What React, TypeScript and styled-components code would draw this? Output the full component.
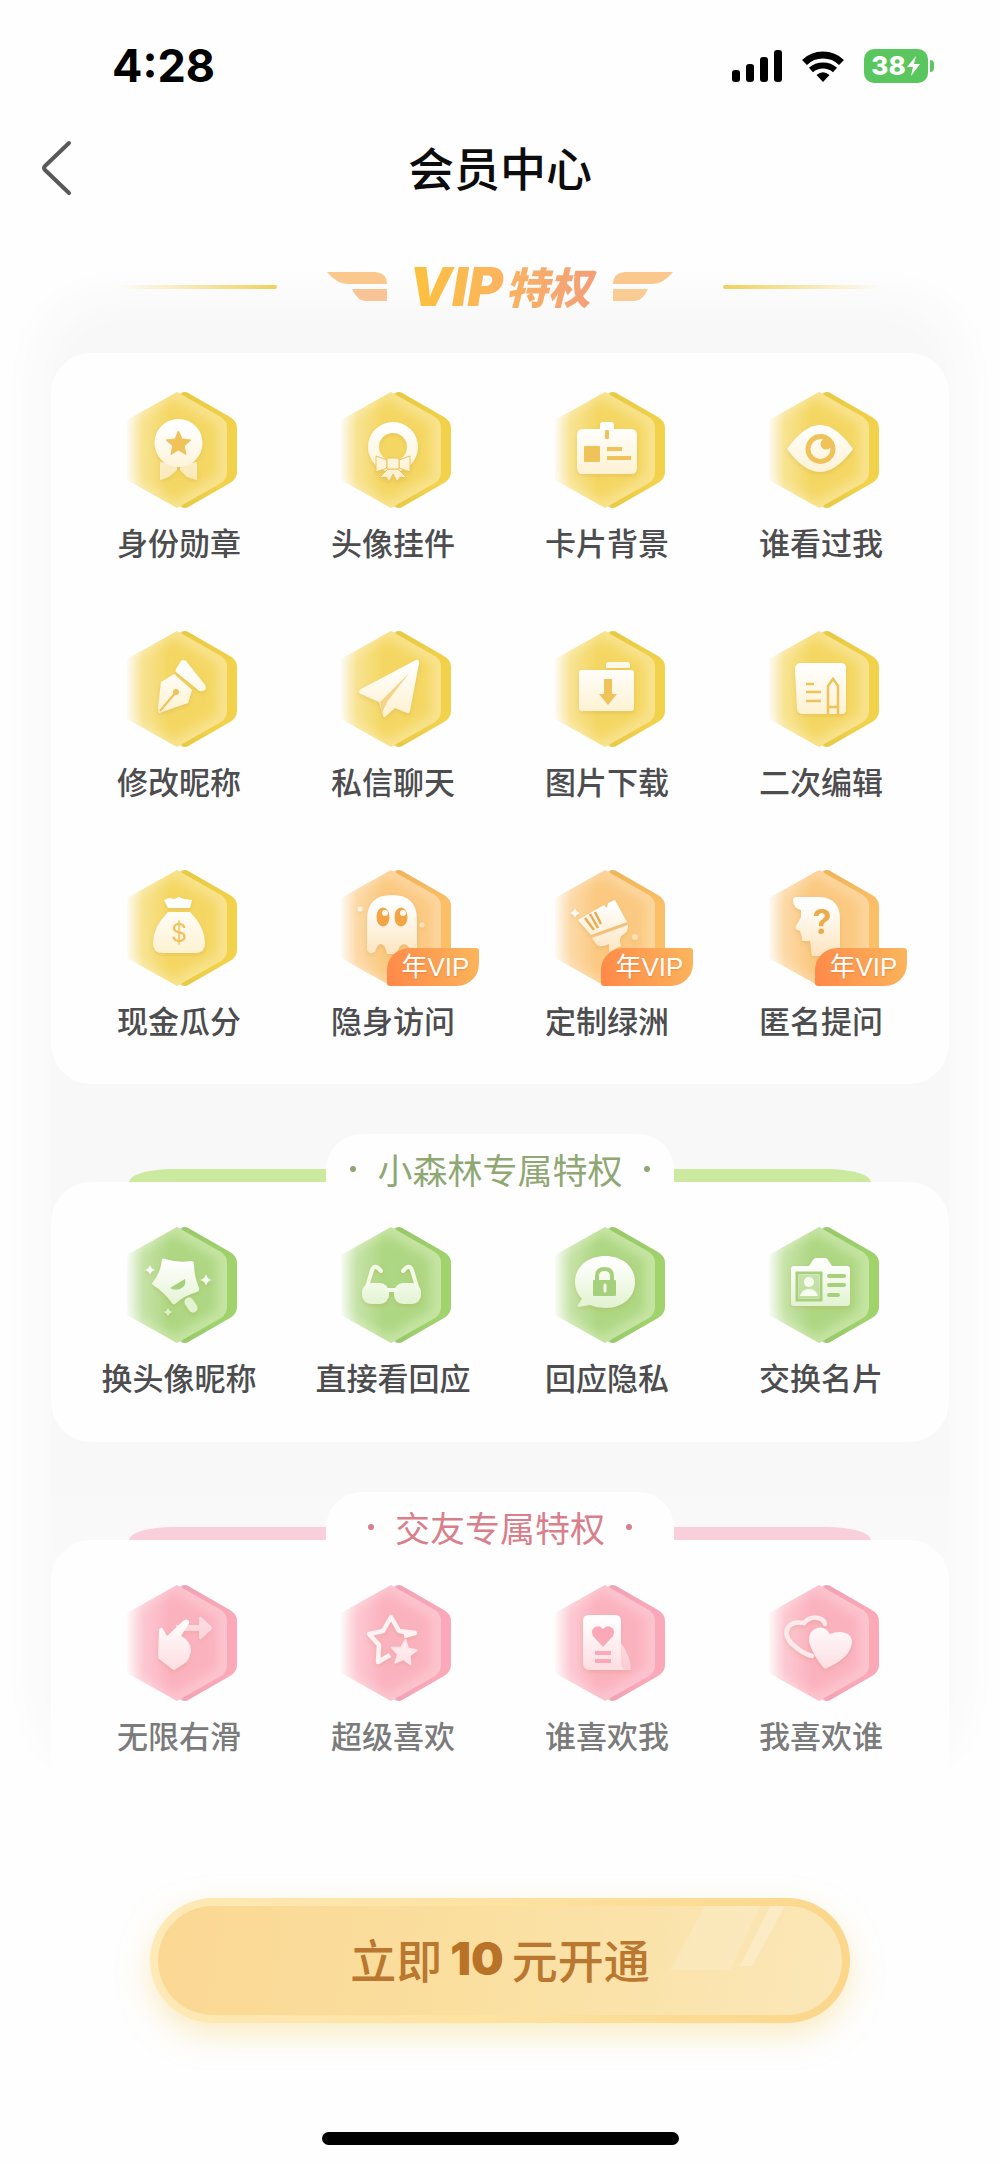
import React from "react";
import styled, { createGlobalStyle } from "styled-components";

const cjk = `"Noto Sans CJK SC", sans-serif`;
const latin = `Inter, "Noto Sans CJK SC", sans-serif`;

const GlobalStyle = createGlobalStyle`
  *, *::before, *::after { box-sizing: border-box; }
  body { margin: 0; background: #fefefe; font-family: ${cjk}; color: #4b4b4d; }
  button { font: inherit; color: inherit; border: 0; padding: 0; background: none; cursor: pointer; }
  ul { list-style: none; margin: 0; padding: 0; }
  h1, h2 { margin: 0; }
`;

const Page = styled.div`
  display: flex;
  flex-direction: column;
  min-height: 100vh;
  overflow: hidden;
`;

/* ---------- status bar ---------- */

const StatusBar = styled.div`
  display: flex;
  align-items: center;
  justify-content: space-between;
  padding: 44px 66px 38px 112px;
`;

const Clock = styled.time`
  font: 700 45px/44px ${latin};
  color: #000;
`;

const StatusIcons = styled.div`
  display: flex;
  align-items: center;
  gap: 20px;
`;

const Battery = styled.div`
  display: flex;
  align-items: center;
  gap: 2px;
`;

const BatteryBody = styled.span`
  display: flex;
  align-items: center;
  justify-content: center;
  width: 64px;
  height: 34px;
  border-radius: 10px;
  background: #5ac75e;
  color: #fff;
  font: 800 26px/34px ${latin};
`;

const BatteryNub = styled.span`
  width: 4px;
  height: 12px;
  border-radius: 0 6px 6px 0;
  background: #5ac75e;
`;

/* ---------- navigation ---------- */

const NavBar = styled.header`
  display: grid;
  grid-template-columns: 72px 1fr 72px;
  align-items: center;
  height: 88px;
  padding: 0 20px 4px;
`;

const BackButton = styled.button`
  display: flex;
  justify-content: center;
  svg { display: block; }
`;

const PageTitle = styled.h1`
  padding-bottom: 4px;
  font-size: 46px;
  line-height: 56px;
  font-weight: 500;
  text-align: center;
  color: #0c0c0c;
`;

/* ---------- VIP heading ---------- */

const VipHeading = styled.div`
  position: relative;
  z-index: 1;
  display: flex;
  align-items: center;
  justify-content: center;
  padding: 43px 118px 36px;
`;

const HeadingLine = styled.span<{ $side: "left" | "right" }>`
  flex: 1;
  height: 4px;
  border-radius: 2px;
  background: linear-gradient(to ${(p) => p.$side}, #efd15c, rgba(251, 236, 180, 0));
`;

const Wing = styled.svg`
  width: 60px;
  height: 30px;
  margin-left: 50px;
`;

const WingRight = styled(Wing)`
  margin: 0 50px 0 0;
`;

const VipTitle = styled.h2`
  display: flex;
  align-items: center;
  justify-content: center;
  gap: 2px;
  width: 226px;
  line-height: 60px;
  font-style: italic;
  font-weight: 900;
  color: transparent;
  background: linear-gradient(90deg, #fbc23c 10%, #fbb45e 50%, #f3a078 90%);
  -webkit-background-clip: text;
  background-clip: text;
`;

const VipLatin = styled.span`
  font: italic 900 54px/60px ${latin};
`;

const VipHan = styled.span`
  padding-bottom: 4px;
  font-size: 43px;
  line-height: 56px;
`;

/* ---------- cards ---------- */

const Main = styled.main`
  display: flex;
  flex-direction: column;
  margin: 0 51px;
  border-radius: 60px;
  background: linear-gradient(#f8f8f8 78%, #fefefe 97%);
  box-shadow: 0 -44px 44px 14px #f8f8f8;
`;

const Card = styled.div<{ $roomy?: boolean }>`
  padding: ${(p) => (p.$roomy ? "43px 21px" : "37px 21px 42px")};
  border-radius: 40px;
  background: #fefefe;
`;

const Grid = styled.ul`
  display: grid;
  grid-template-columns: repeat(4, 1fr);
  row-gap: 65px;
`;

const Cell = styled.li`
  display: flex;
  justify-content: center;
`;

const Perk = styled.button`
  display: flex;
  flex-direction: column;
  align-items: center;
  gap: 12px;
  padding-bottom: 2px;
`;

const IconBox = styled.span`
  position: relative;
  display: block;
  width: 120px;
  height: 120px;
  svg { display: block; overflow: visible; }
`;

const YearBadge = styled.span`
  position: absolute;
  left: 54px;
  bottom: 2px;
  width: 92px;
  height: 38px;
  padding-left: 5px;
  border-radius: 22px 3px 22px 3px;
  background: linear-gradient(75deg, #ff8848, #fab65c);
  color: #fff;
  font: 400 26px/38px "Liberation Sans", ${cjk};
  text-align: center;
  text-shadow: 0 1px 2px rgba(214, 100, 20, 0.4);
  white-space: nowrap;
`;

const Label = styled.span<{ $faded?: boolean }>`
  font-size: 31px;
  line-height: 40px;
  font-weight: 500;
  white-space: nowrap;
  color: ${(p) => (p.$faded ? "#7b7b7b" : "#4d4d4f")};
`;

const Section = styled.section`
  display: flex;
  flex-direction: column;
  margin-top: 50px;
`;

const TabRow = styled.div`
  position: relative;
  z-index: 1;
  display: flex;
  align-items: flex-start;
  justify-content: center;
  margin-bottom: -12px;
  padding: 0 78px;
`;

const Strip = styled.span<{ $color: string; $side: "left" | "right" }>`
  flex: 1;
  height: 13px;
  margin-top: 35px;
  background: ${(p) => p.$color};
  border-radius: ${(p) => (p.$side === "left" ? "44px 0 0 0 / 13px 0 0 0" : "0 44px 0 0 / 0 13px 0 0")};
`;

const Tab = styled.h2<{ $color: string }>`
  display: flex;
  align-items: center;
  justify-content: center;
  gap: 21px;
  width: 348px;
  height: 60px;
  padding-top: 10px;
  border-radius: 36px 36px 0 0;
  background: #fefefe;
  color: ${(p) => p.$color};
  font-size: 35px;
  line-height: 50px;
  font-weight: 400;
  &::before,
  &::after {
    content: "";
    width: 6px;
    height: 6px;
    border-radius: 50%;
    background: currentColor;
  }
`;

/* ---------- footer ---------- */

const Footer = styled.footer`
  display: flex;
  flex-direction: column;
  align-items: center;
  padding: 98px 150px 21px;
`;

const BuyButton = styled.button`
  position: relative;
  display: flex;
  align-items: center;
  justify-content: center;
  gap: 8px;
  align-self: stretch;
  height: 125px;
  padding-bottom: 6px;
  border: 8px solid transparent;
  border-radius: 63px;
  background:
    linear-gradient(100deg, #fbd793, #fadf9f 45%, #fbe7b8) padding-box,
    linear-gradient(100deg, #feeab8, #fde2a0 50%, #fbd68a) border-box;
  box-shadow: 0 12px 30px rgba(247, 220, 140, 0.5);
  color: #b97730;
  font-size: 46px;
  line-height: 60px;
  font-weight: 500;
`;

const Price = styled.strong`
  font: 900 46px/60px ${latin};
  color: #b97328;
`;

const Shine = styled.svg`
  position: absolute;
  top: 0;
  right: 42px;
  width: 130px;
  height: 64px;
`;

const HomeIndicator = styled.div`
  width: 51%;
  height: 13px;
  margin-top: 109px;
  border-radius: 7px;
  background: #000;
`;

/* ---------- hexagon icons ---------- */

type Tone = "gold" | "amber" | "green" | "pink";

const tones: Record<Tone, { side: string; edge: string; rim: string; core: string; ink: string; tint: string }> = {
  gold: { side: "#f3d24b", edge: "#e6ca42", rim: "#f8e28c", core: "#f4d764", ink: "#efc25a", tint: "#fdf0cc" },
  amber: { side: "#fbbf68", edge: "#efb455", rim: "#fcd59d", core: "#fbc981", ink: "#ecab4e", tint: "#fde3ba" },
  green: { side: "#a0d36c", edge: "#98c86a", rim: "#c5e4a2", core: "#aed783", ink: "#a7d07c", tint: "#dcf1c8" },
  pink: { side: "#fba9b9", edge: "#f0a3b5", rim: "#fcc4cd", core: "#fbb2bf", ink: "#fba9b8", tint: "#fddbe0" },
};

const SharedDefs = () => (
  <svg width="0" height="0" aria-hidden="true" style={{ position: "absolute" }}>
    <defs>
      <linearGradient id="fade-left" gradientUnits="userSpaceOnUse" x1="6" y1="0" x2="50" y2="0">
        <stop offset="0" stopColor="#fff" stopOpacity="0" />
        <stop offset="0.4" stopColor="#fff" stopOpacity="0.7" />
        <stop offset="1" stopColor="#fff" />
      </linearGradient>
      <mask id="hex-mask" maskUnits="userSpaceOnUse" x="0" y="0" width="120" height="120">
        <rect width="120" height="120" fill="url(#fade-left)" />
      </mask>
      <linearGradient id="side-fade" gradientUnits="userSpaceOnUse" x1="58" y1="0" x2="64" y2="0">
        <stop offset="0" stopColor="#fff" stopOpacity="0" />
        <stop offset="1" stopColor="#fff" />
      </linearGradient>
      <mask id="side-mask" maskUnits="userSpaceOnUse" x="0" y="0" width="120" height="120">
        <rect width="120" height="120" fill="url(#side-fade)" />
      </mask>
      <clipPath id="hex-clip">
        <path d="M58 2L102 27Q108 31 108 38V82Q108 89 102 93L58 118L8 90V30Z" />
      </clipPath>
      <filter id="soft" x="-30%" y="-30%" width="160%" height="160%">
        <feGaussianBlur stdDeviation="5" />
      </filter>
      <filter id="lift" x="-20%" y="-20%" width="140%" height="150%">
        <feDropShadow dx="0" dy="2" stdDeviation="2" floodColor="#b87a1c" floodOpacity="0.2" />
      </filter>
      {(Object.keys(tones) as Tone[]).map((t) => (
        <React.Fragment key={t}>
          <linearGradient id={`side-${t}`} x1="0" y1="0" x2="0" y2="1">
            <stop offset="0" stopColor={tones[t].edge} />
            <stop offset="0.3" stopColor={tones[t].side} />
            <stop offset="0.8" stopColor={tones[t].side} />
            <stop offset="1" stopColor={tones[t].edge} />
          </linearGradient>
          <linearGradient id={`glyph-${t}`} gradientUnits="userSpaceOnUse" x1="0" y1="30" x2="0" y2="90">
            <stop offset="0.1" stopColor="#fff" />
            <stop offset="1" stopColor={tones[t].tint} />
          </linearGradient>
        </React.Fragment>
      ))}
    </defs>
  </svg>
);

const star = (cx: number, cy: number, outer: number, inner: number, turn = 0) =>
  Array.from({ length: 10 }, (_, i) => {
    const r = i % 2 ? inner : outer;
    const a = ((i * 36 - 90 + turn) * Math.PI) / 180;
    return `${(cx + r * Math.cos(a)).toFixed(1)},${(cy + r * Math.sin(a)).toFixed(1)}`;
  }).join(" ");

const spark = (x: number, y: number, r: number) =>
  `M${x} ${y - r}Q${x + 1} ${y - 1} ${x + r} ${y}Q${x + 1} ${y + 1} ${x} ${y + r}Q${x - 1} ${y + 1} ${x - r} ${y}Q${x - 1} ${y - 1} ${x} ${y - r}Z`;

/* Each glyph draws with the light fill it inherits; `ink` is the colour of its cut-outs. */
const glyphs: Record<string, (ink: string) => React.ReactNode> = {
  medal: (ink) => (
    <>
      <path opacity="0.8" d="M41 72V90L50 87L58 80V74ZM61 74V80L68 87L78 90V72Z" />
      <circle cx="59.5" cy="53" r="24" />
      <polygon points={star(59.5, 54, 13, 6)} fill={ink} stroke={ink} strokeWidth="1" strokeLinejoin="round" />
    </>
  ),
  wreath: (ink) => (
    <>
      <path fillRule="evenodd" d="M60 32a25 25 0 1 1 0 50a25 25 0 1 1 0-50ZM60 43a14 14 0 1 0 0 28a14 14 0 1 0 0-28Z" />
      <g stroke={ink} strokeWidth="1">
        <path d="M43 66L54 70V78L43 82Z" />
        <path d="M77 66L66 70V78L77 82Z" />
        <path d="M55 79L46 88L53 87L56 92L60 84L64 92L67 87L74 88L65 79Z" />
        <rect x="54" y="68" width="12" height="11" rx="1" />
      </g>
    </>
  ),
  badge: (ink) => (
    <>
      <path d="M36 39H53V35Q53 32 56 32H64Q67 32 67 35V39H84Q90 39 90 45V78Q90 84 84 84H36Q30 84 30 78V45Q30 39 36 39Z" />
      <g fill={ink}>
        <rect x="58" y="40" width="4" height="9" rx="1" />
        <rect x="37" y="56" width="16" height="16" rx="1" />
        <rect x="60" y="57" width="15" height="4" />
        <rect x="60" y="66" width="24" height="4" />
      </g>
    </>
  ),
  eye: (ink) => (
    <>
      <path d="M26 59Q43 35 59 35Q75 35 92 59Q75 82 59 82Q43 82 26 59Z" strokeLinejoin="round" />
      <circle cx="59.5" cy="59" r="12.5" fill="none" stroke={ink} strokeWidth="5" />
      <circle cx="65" cy="54" r="5.5" fill={ink} />
    </>
  ),
  pen: (ink) => (
    <>
      <path d="M57 40L62 32Q64 30 67 32L86 56Q88 59 86 61L83 62Q80 63 78 60L57 43Q56 42 57 40Z" />
      <path d="M55 45L73 61L69 74L40 84L39 79L42 53Z" strokeLinejoin="round" />
      <path d="M41 82L57 63" stroke={ink} strokeWidth="2" />
      <circle cx="57" cy="63" r="3" fill={ink} />
    </>
  ),
  plane: (ink) => (
    <>
      <path d="M83 31Q86 30 86 34L77 82Q76 85 74 84L62 79L52 88Q50 89 50 86L46 73L28 65Q24 63 28 60Z" />
      <path d="M77 43L47 73L49 84L54 73Z" fill={ink} opacity="0.65" />
    </>
  ),
  folder: (ink) => (
    <>
      <path d="M62 33H80Q83 33 83 36V39H59V36Q59 33 62 33Z" opacity="0.85" />
      <rect x="32" y="41" width="55" height="41" rx="3" />
      <path d="M57 50H65V65H70L61 76L52 65H57Z" fill={ink} />
    </>
  ),
  note: (ink) => (
    <>
      <path d="M40 34H80Q86 34 85 41V79Q86 85 80 85H43Q36 85 36 79L34 41Q34 34 40 34Z" />
      <g fill="none" stroke={ink} strokeWidth="2.5">
        <path d="M45 55H53M45 63H60M45 72H60" />
        <path d="M67 85V57L72 50L77 57V85M67 78H77" />
      </g>
    </>
  ),
  money: (ink) => (
    <>
      <path d="M45 32L50 30L55 31L60 29L65 31L73 32L71 40H49Z" strokeLinejoin="round" />
      <path d="M49 44H71Q86 59 86 75Q86 85 76 85H44Q34 85 34 75Q34 59 49 44Z" />
      <text x="60" y="74" textAnchor="middle" fontFamily="Inter, sans-serif" fontSize="25" fill={ink} stroke="none">
        $
      </text>
    </>
  ),
  ghost: () => (
    <>
      <path d="M34 82V52Q34 27 59 27Q84 27 84 52V84L78 86Q76 76 71 76Q66 76 64 86H54Q52 76 48 76Q44 76 42 84Q36 87 34 82Z" />
      <g fill="#f3a544">
        <ellipse cx="50" cy="49" rx="6.5" ry="9.5" />
        <ellipse cx="68" cy="49" rx="6.5" ry="9.5" />
      </g>
      <circle cx="52" cy="45" r="3" />
      <circle cx="70" cy="45" r="3" />
      <circle cx="27" cy="41" r="2.5" opacity="0.8" />
      <circle cx="89" cy="57" r="2.5" opacity="0.6" />
    </>
  ),
  brush: (ink) => (
    <>
      <path d="M31 52L57 37L60 40L61 35L68 32L80 54L44 67Z" />
      <path d="M38 50L47 62M43 46L51 60M48 44L54 56" stroke={ink} strokeWidth="2.5" />
      <path d="M45 70L81 57Q82 64 74 68Q72 72 74 78L62 84L62 76Q54 80 50 77Z" />
      <path d={spark(28, 45, 5)} />
      <circle cx="88" cy="69" r="3" opacity="0.6" />
    </>
  ),
  head: (ink) => (
    <>
      <path d="M32 32Q32 29 36 29H60Q79 31 79 51V88H51L49 73H43Q40 73 41 69L39 63L35 61Q34 60 35 58L40 49V42Q32 40 32 32Z" />
      <text x="61" y="66" textAnchor="middle" fontFamily="Inter, sans-serif" fontWeight="700" fontSize="34" fill={ink} stroke="none">
        ?
      </text>
    </>
  ),
  wand: (ink) => (
    <>
      <path d="M70 77L74 83" stroke="#e2f3d2" strokeWidth="9" strokeLinecap="round" />
      <path d="M43 34Q44 33 46 34Q59 38 72 36Q75 36 75 39Q75 51 80 63Q81 66 78 67Q66 70 56 79Q54 80 53 78Q45 67 34 60Q32 59 34 57Q42 47 43 34Z" />
      <path d="M51 63L66 54Q68 61 61 64Q55 66 51 63Z" fill={ink} />
      <path d={`${spark(31, 45, 5)}${spark(87, 55, 6)}${spark(49, 87, 4)}`} />
    </>
  ),
  glasses: () => (
    <>
      <rect x="29" y="58" width="27" height="21" rx="9" />
      <rect x="61" y="58" width="27" height="21" rx="9" />
      <g fill="none" stroke="#f3fbe9" strokeWidth="4" strokeLinecap="round">
        <path d="M54 65H63" />
        <path d="M34 62L39 45Q42 38 48 46M84 62L79 45Q76 38 70 46" />
      </g>
    </>
  ),
  lock: (ink) => (
    <>
      <path d="M58 31C76 31 88 42 88 57S76 83 58 83Q50 83 43 80L31 82Q30 81 31 80L35 74Q28 67 28 57C28 42 41 31 58 31Z" />
      <rect x="46" y="55" width="23" height="16" rx="1" fill={ink} />
      <path d="M50 56V51Q50 44 57.500 44T65 51V56" fill="none" stroke={ink} strokeWidth="4" />
      <path d="M58 60V66" stroke="#f1fae8" strokeWidth="3" strokeLinecap="round" />
    </>
  ),
  idcard: (ink) => (
    <>
      <path d="M33 41H48L52 35Q53 33 55 33H64Q66 33 67 35L71 41H86Q89 41 89 44V78Q89 81 86 81H33Q30 81 30 78V44Q30 41 33 41Z" />
      <rect x="36" y="48" width="24" height="27" fill="none" stroke={ink} strokeWidth="3" />
      <rect x="38" y="50" width="20" height="23" fill={ink} opacity="0.6" />
      <circle cx="48" cy="57" r="5" fill="#f6fcef" />
      <path d="M39 71Q41 64 48 64T57 71Z" fill="#f6fcef" />
      <path d="M68 51H83M68 60H83M68 70H77" stroke={ink} strokeWidth="4" strokeLinecap="round" />
    </>
  ),
  swipe: () => (
    <>
      <path d="M57 42H80V35Q80 33 82 34L92 43Q94 45 92 47L82 56Q80 57 80 54V48H57Z" opacity="0.55" />
      <path d="M40 47Q41 43 44 46L48 53L64 38Q68 35 70 38Q71 40 69 42L62 53Q72 58 72 68Q70 78 66 80L57 86Q55 88 53 86L39 75Z" />
    </>
  ),
  stars: () => (
    <>
      <path d="M71 53L82 50L66 48L58 34L50 48L36 51L46 62L45 79L57 72" fill="none" stroke="#fff3f4" strokeWidth="4.500" strokeLinejoin="round" />
      <polygon points={star(71, 70, 13, 6, 6)} stroke="#fde6ea" strokeWidth="2" strokeLinejoin="round" />
    </>
  ),
  likecard: (ink) => (
    <>
      <path d="M74 60Q84 74 84 87H70Z" opacity="0.65" />
      <path d="M42 32H68Q74 32 74 38V80Q74 87 80 87H43Q36 87 36 80V38Q36 32 42 32Z" />
      <path d="M56 64L46 53Q43 47 48 44Q53 42 56 46Q59 42 64 44Q69 47 66 53Z" fill={ink} />
      <path d="M48 70H64M48 78H64" stroke={ink} strokeWidth="4" />
    </>
  ),
  hearts: () => (
    <>
      <path d="M51 73Q42 71 30 60Q22 50 28 43Q33 38 43 40Q49 33 57 35Q63 36 64 41" fill="none" stroke="#fdeaed" strokeWidth="4.500" strokeLinecap="round" />
      <path d="M62 84Q52 72 48 59Q47 48 56 45Q64 43 69 51Q79 47 87 51Q93 56 90 64Q86 76 66 85Q64 87 62 84Z" />
    </>
  ),
};

const HexIcon = ({ tone, glyph }: { tone: Tone; glyph: string }) => {
  const c = tones[tone];
  return (
    <svg width="120" height="120" viewBox="0 0 120 120" aria-hidden="true">
      <g mask="url(#side-mask)">
        <path d="M60 4Q66 0 71 4L111 27Q118 31 118 38V82Q118 89 111 93L71 116Q66 120 60 116Z" fill={`url(#side-${tone})`} />
      </g>
      <g mask="url(#hex-mask)">
        <g clipPath="url(#hex-clip)">
          <rect width="120" height="120" fill={c.rim} />
          <path d="M56 10L98 35V85L56 110L6 86V34Z" fill={c.core} filter="url(#soft)" />
        </g>
      </g>
      <g fill={`url(#glyph-${tone})`} filter="url(#lift)">
        {glyphs[glyph](c.ink)}
      </g>
    </svg>
  );
};

/* ---------- content ---------- */

type PerkInfo = { label: string; glyph: string; yearly?: boolean };

const vipPerks: PerkInfo[] = [
  { label: "身份勋章", glyph: "medal" },
  { label: "头像挂件", glyph: "wreath" },
  { label: "卡片背景", glyph: "badge" },
  { label: "谁看过我", glyph: "eye" },
  { label: "修改昵称", glyph: "pen" },
  { label: "私信聊天", glyph: "plane" },
  { label: "图片下载", glyph: "folder" },
  { label: "二次编辑", glyph: "note" },
  { label: "现金瓜分", glyph: "money" },
  { label: "隐身访问", glyph: "ghost", yearly: true },
  { label: "定制绿洲", glyph: "brush", yearly: true },
  { label: "匿名提问", glyph: "head", yearly: true },
];

const forestPerks: PerkInfo[] = [
  { label: "换头像昵称", glyph: "wand" },
  { label: "直接看回应", glyph: "glasses" },
  { label: "回应隐私", glyph: "lock" },
  { label: "交换名片", glyph: "idcard" },
];

const datingPerks: PerkInfo[] = [
  { label: "无限右滑", glyph: "swipe" },
  { label: "超级喜欢", glyph: "stars" },
  { label: "谁喜欢我", glyph: "likecard" },
  { label: "我喜欢谁", glyph: "hearts" },
];

const PerkGrid = ({ perks, tone, faded }: { perks: PerkInfo[]; tone: Tone; faded?: boolean }) => (
  <Grid>
    {perks.map((p) => (
      <Cell key={p.label}>
        <Perk type="button">
          <IconBox>
            <HexIcon tone={p.yearly ? "amber" : tone} glyph={p.glyph} />
            {p.yearly && <YearBadge>年VIP</YearBadge>}
          </IconBox>
          <Label $faded={faded}>{p.label}</Label>
        </Perk>
      </Cell>
    ))}
  </Grid>
);

export default function App() {
  return (
    <Page>
      <GlobalStyle />
      <SharedDefs />

      <StatusBar>
        <Clock>4:28</Clock>
        <StatusIcons>
          <svg width="50" height="32" viewBox="0 0 50 32" aria-hidden="true">
            <rect x="0" y="20" width="8" height="12" rx="3" />
            <rect x="14" y="14" width="8" height="18" rx="3" />
            <rect x="28" y="7" width="8" height="25" rx="3" />
            <rect x="42" y="0" width="8" height="32" rx="3" />
          </svg>
          <svg width="42" height="31" viewBox="0 0 42 31" aria-hidden="true">
            <g fill="none" stroke="#000" strokeWidth="7">
              <path d="M2.500 11.500Q10 4 21 4T39.500 11.500" />
              <path d="M9 19Q14 14.500 21 14.500T33 19" strokeWidth="6" />
            </g>
            <path d="M14.500 24Q21 18.500 27.500 24L21 31Z" />
          </svg>
          <Battery>
            <BatteryBody>
              38
              <svg width="15" height="20" viewBox="0 0 15 20" aria-hidden="true">
                <path d="M10 0L1 11H7L5 20L14 8H8Z" fill="#fff" />
              </svg>
            </BatteryBody>
            <BatteryNub />
          </Battery>
        </StatusIcons>
      </StatusBar>

      <NavBar>
        <BackButton type="button" aria-label="返回">
          <svg width="32" height="56" viewBox="0 0 32 56" aria-hidden="true">
            <path d="M29 3L5 26Q3 28 5 30L29 53" fill="none" stroke="#59595b" strokeWidth="4" strokeLinecap="round" />
          </svg>
        </BackButton>
        <PageTitle>会员中心</PageTitle>
      </NavBar>

      <VipHeading>
        <HeadingLine $side="left" />
        <Wing viewBox="0 0 60 30" aria-hidden="true">
          <path d="M0 0H48Q60 1 60 12H20Q10 12 0 0Z" fill="#fac88c" />
          <path d="M25 17H60V29H38Q30 28 25 17Z" fill="#f8c495" />
        </Wing>
        <VipTitle>
          <VipLatin>VIP</VipLatin>
          <VipHan>特权</VipHan>
        </VipTitle>
        <WingRight viewBox="0 0 60 30" aria-hidden="true">
          <path d="M60 0H12Q0 1 0 12H40Q50 12 60 0Z" fill="#fac88c" />
          <path d="M35 17H0V29H22Q30 28 35 17Z" fill="#f9cc94" />
        </WingRight>
        <HeadingLine $side="right" />
      </VipHeading>

      <Main>
        <Card>
          <PerkGrid perks={vipPerks} tone="gold" />
        </Card>

        <Section>
          <TabRow>
            <Strip $side="left" $color="#cce9a0" />
            <Tab $color="#8fa873">小森林专属特权</Tab>
            <Strip $side="right" $color="#cce9a0" />
          </TabRow>
          <Card $roomy>
            <PerkGrid perks={forestPerks} tone="green" />
          </Card>
        </Section>

        <Section>
          <TabRow>
            <Strip $side="left" $color="#f9cfdb" />
            <Tab $color="#d97f8c">交友专属特权</Tab>
            <Strip $side="right" $color="#f9cfdb" />
          </TabRow>
          <Card $roomy>
            <PerkGrid perks={datingPerks} tone="pink" faded />
          </Card>
        </Section>
      </Main>

      <Footer>
        <BuyButton type="button">
          <Shine viewBox="0 0 130 64" aria-hidden="true">
            <path d="M35 0H90L60 64H0Z" fill="#fff" opacity="0.16" />
            <path d="M100 0H115L82 60H70Z" fill="#fff" opacity="0.25" />
          </Shine>
          <span>立即</span>
          <Price>10</Price>
          <span>元开通</span>
        </BuyButton>
        <HomeIndicator />
      </Footer>
    </Page>
  );
}
